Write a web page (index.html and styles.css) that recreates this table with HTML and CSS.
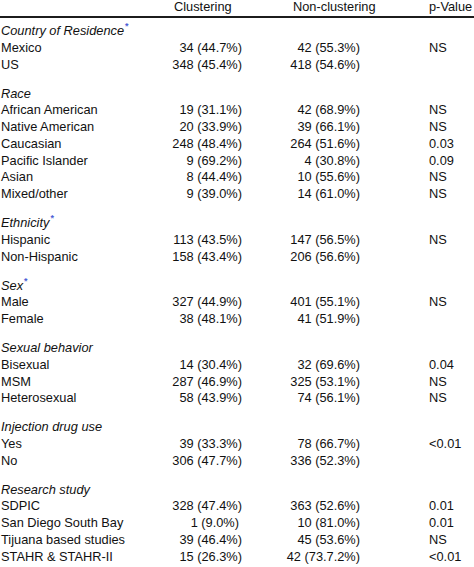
FILE: index.html
```html
<!DOCTYPE html>
<html>
<head>
<meta charset="utf-8">
<link rel="stylesheet" href="styles.css">
</head>
<body>
<div class="table">
  <div class="head">
    <div></div>
    <div>Clustering</div>
    <div>Non-clustering</div>
    <div>p-Value</div>
  </div>

  <div class="section first">
    <div class="row"><div class="cat">Country of Residence<sup class="ast">*</sup></div></div>
    <div class="row"><div class="lab">Mexico</div><div class="n">34 (44.7%)</div><div class="n">42 (55.3%)</div><div></div><div class="p">NS</div></div>
    <div class="row"><div class="lab">US</div><div class="n">348 (45.4%)</div><div class="n">418 (54.6%)</div><div></div><div class="p"></div></div>
  </div>

  <div class="section">
    <div class="row"><div class="cat">Race</div></div>
    <div class="row"><div class="lab">African American</div><div class="n">19 (31.1%)</div><div class="n">42 (68.9%)</div><div></div><div class="p">NS</div></div>
    <div class="row"><div class="lab">Native American</div><div class="n">20 (33.9%)</div><div class="n">39 (66.1%)</div><div></div><div class="p">NS</div></div>
    <div class="row"><div class="lab">Caucasian</div><div class="n">248 (48.4%)</div><div class="n">264 (51.6%)</div><div></div><div class="p">0.03</div></div>
    <div class="row"><div class="lab">Pacific Islander</div><div class="n">9 (69.2%)</div><div class="n">4 (30.8%)</div><div></div><div class="p">0.09</div></div>
    <div class="row"><div class="lab">Asian</div><div class="n">8 (44.4%)</div><div class="n">10 (55.6%)</div><div></div><div class="p">NS</div></div>
    <div class="row"><div class="lab">Mixed/other</div><div class="n">9 (39.0%)</div><div class="n">14 (61.0%)</div><div></div><div class="p">NS</div></div>
  </div>

  <div class="section">
    <div class="row"><div class="cat">Ethnicity<sup class="ast">*</sup></div></div>
    <div class="row"><div class="lab">Hispanic</div><div class="n">113 (43.5%)</div><div class="n">147 (56.5%)</div><div></div><div class="p">NS</div></div>
    <div class="row"><div class="lab">Non-Hispanic</div><div class="n">158 (43.4%)</div><div class="n">206 (56.6%)</div><div></div><div class="p"></div></div>
  </div>

  <div class="section">
    <div class="row"><div class="cat">Sex<sup class="ast">*</sup></div></div>
    <div class="row"><div class="lab">Male</div><div class="n">327 (44.9%)</div><div class="n">401 (55.1%)</div><div></div><div class="p">NS</div></div>
    <div class="row"><div class="lab">Female</div><div class="n">38 (48.1%)</div><div class="n">41 (51.9%)</div><div></div><div class="p"></div></div>
  </div>

  <div class="section">
    <div class="row"><div class="cat">Sexual behavior</div></div>
    <div class="row"><div class="lab">Bisexual</div><div class="n">14 (30.4%)</div><div class="n">32 (69.6%)</div><div></div><div class="p">0.04</div></div>
    <div class="row"><div class="lab">MSM</div><div class="n">287 (46.9%)</div><div class="n">325 (53.1%)</div><div></div><div class="p">NS</div></div>
    <div class="row"><div class="lab">Heterosexual</div><div class="n">58 (43.9%)</div><div class="n">74 (56.1%)</div><div></div><div class="p">NS</div></div>
  </div>

  <div class="section">
    <div class="row"><div class="cat">Injection drug use</div></div>
    <div class="row"><div class="lab">Yes</div><div class="n">39 (33.3%)</div><div class="n">78 (66.7%)</div><div></div><div class="p">&lt;0.01</div></div>
    <div class="row"><div class="lab">No</div><div class="n">306 (47.7%)</div><div class="n">336 (52.3%)</div><div></div><div class="p"></div></div>
  </div>

  <div class="section">
    <div class="row"><div class="cat">Research study</div></div>
    <div class="row"><div class="lab">SDPIC</div><div class="n">328 (47.4%)</div><div class="n">363 (52.6%)</div><div></div><div class="p">0.01</div></div>
    <div class="row"><div class="lab">San Diego South Bay</div><div class="n n-narrow">1 (9.0%)</div><div class="n">10 (81.0%)</div><div></div><div class="p">0.01</div></div>
    <div class="row"><div class="lab">Tijuana based studies</div><div class="n">39 (46.4%)</div><div class="n">45 (53.6%)</div><div></div><div class="p">NS</div></div>
    <div class="row"><div class="lab">STAHR &amp; STAHR-II</div><div class="n">15 (26.3%)</div><div class="n">42 (73.7.2%)</div><div></div><div class="p">&lt;0.01</div></div>
  </div>
</div>
</body>
</html>
```

FILE: styles.css
```css
html, body {
  margin: 0;
  padding: 0;
  background: #ffffff;
}

body {
  font-family: "Liberation Sans", Arial, sans-serif;
  font-size: 12.8px;
  color: #111111;
  width: 474px;
  height: 567px;
  overflow: hidden;
}

.table {
  display: flex;
  flex-direction: column;
}

.head {
  display: grid;
  grid-template-columns: 174px 119px 136px 1fr;
  line-height: 14px;
  padding-bottom: 2px;
  border-bottom: 2px solid #1c1c1c;
  white-space: nowrap;
}

.section {
  display: flex;
  flex-direction: column;
  margin-top: 12.2px;
}

.section.first {
  margin-top: 5.3px;
}

.row {
  display: grid;
  grid-template-columns: 160px 82px 118px 69px 1fr;
  height: 16.75px;
  line-height: 16.75px;
  white-space: nowrap;
}

.lab, .cat {
  padding-left: 1px;
}

.cat {
  font-style: italic;
  grid-column: 1 / 4;
}

.n {
  text-align: right;
}

.n-narrow {
  padding-right: 3px;
}

.ast {
  color: #4c5fd6;
  font-style: normal;
  font-size: 9px;
  font-weight: bold;
  line-height: 0;
  vertical-align: 6px;
  margin-left: 1px;
}
```
